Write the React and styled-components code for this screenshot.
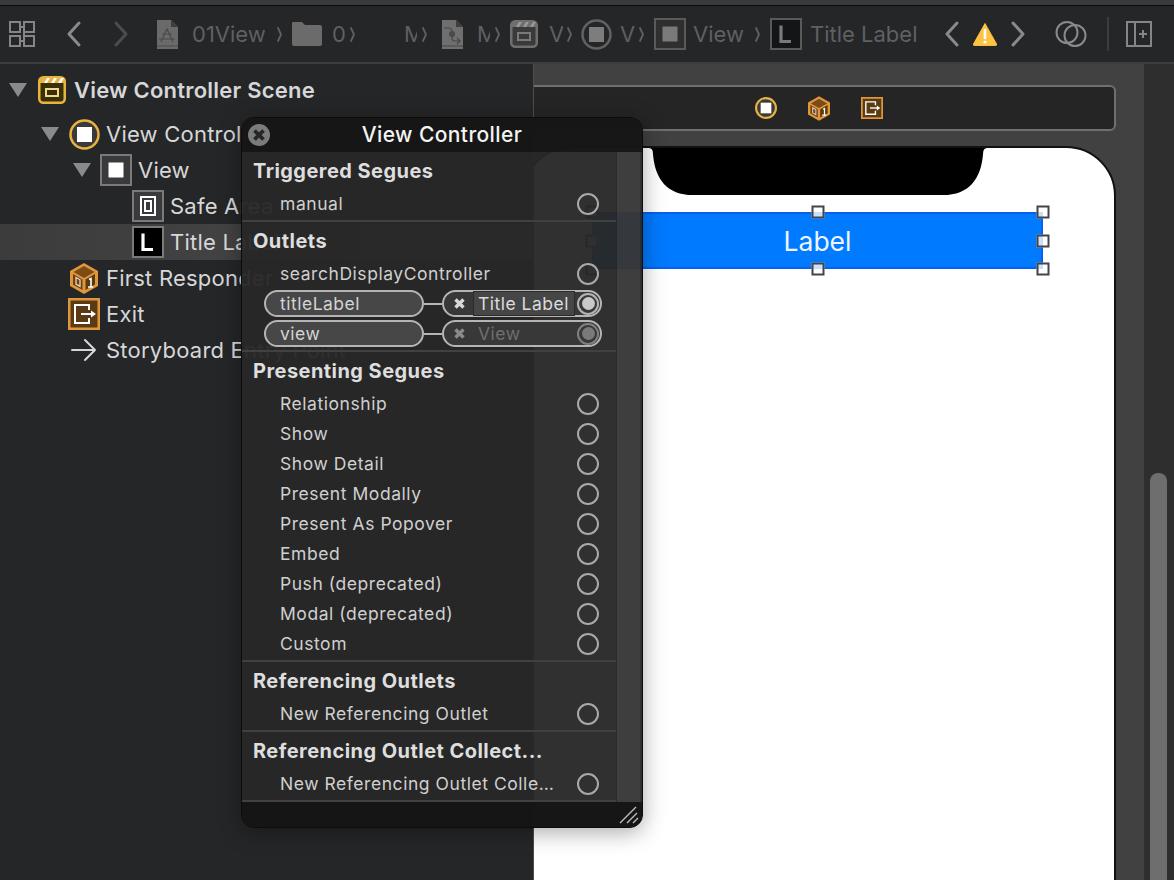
import React from 'react';
import styled, { createGlobalStyle } from 'styled-components';

const GlobalStyle = createGlobalStyle`
  html, body {
    margin: 0;
    padding: 0;
    height: 100%;
    overflow: hidden;
    background: #252628;
  }
  * {
    box-sizing: border-box;
  }
`;

const Window = styled.div`
  position: relative;
  width: 1174px;
  height: 880px;
  overflow: hidden;
  display: flex;
  flex-direction: column;
  font-family: Inter, "Liberation Sans", sans-serif;
`;

const TopStrip = styled.div`
  flex: none;
  height: 6px;
  background: #3a3a3c;
  border-bottom: 1px solid #0a0a0a;
`;

const Toolbar = styled.div`
  flex: none;
  height: 58px;
  display: flex;
  align-items: center;
  padding-left: 9px;
  background: #252628;
  border-bottom: 2px solid #3d3d3f;
`;

const Slot = styled.div`
  flex: none;
  display: flex;
  align-items: center;
  margin-left: ${(p) => p.$ml || 0}px;
`;

const Crumb = styled.div`
  flex: none;
  width: ${(p) => p.$w}px;
  margin-left: ${(p) => p.$ml || 0}px;
  overflow: hidden;
  white-space: nowrap;
  font-size: 22px;
  line-height: 30px;
  color: #5f6062;
`;

const Divider = styled.div`
  flex: none;
  width: 2px;
  height: 34px;
  margin-left: ${(p) => p.$ml}px;
  background: #3b3c3e;
`;

const Main = styled.div`
  flex: 1;
  min-height: 0;
  display: flex;
`;

const Sidebar = styled.div`
  flex: none;
  width: 534px;
  padding-top: 8px;
  background: #252628;
  border-right: 1px solid #4d4d4f;
  position: relative;
  z-index: 1;
`;

const Row = styled.div`
  display: flex;
  align-items: center;
  height: 36px;
  margin-bottom: ${(p) => (p.$scene ? 8 : 0)}px;
  padding-left: ${(p) => p.$level * 32 + 9}px;
  background: ${(p) => (p.$selected ? 'linear-gradient(90deg, #3c3c3d, #4a4a4a)' : 'transparent')};
`;

const Disclosure = styled.div`
  flex: none;
  width: 27px;
  display: flex;
`;

const IconSlot = styled.div`
  flex: none;
  width: 32px;
  height: 32px;
  display: flex;
  align-items: center;
  justify-content: center;
`;

const RowLabel = styled.span`
  margin-left: 6px;
  font-size: 22px;
  letter-spacing: 0.22px;
  font-weight: ${(p) => (p.$scene ? 600 : 400)};
  color: #d6d7d8;
  white-space: nowrap;
`;

const Canvas = styled.div`
  flex: 1;
  min-width: 0;
  display: flex;
  background: #414141;
  overflow: hidden;
`;

const Stage = styled.div`
  flex: none;
  width: 595px;
  margin-left: -13px;
  padding-top: 21px;
  display: flex;
  flex-direction: column;
`;

const SceneBar = styled.div`
  flex: none;
  height: 46px;
  display: flex;
  align-items: center;
  justify-content: center;
  gap: 31px;
  background: #252526;
  border: 2px solid #6f6f6f;
  border-radius: 6px;
`;

const Device = styled.div`
  flex: none;
  height: 800px;
  margin-top: 15px;
  display: flex;
  flex-direction: column;
  align-items: center;
  background: #fff;
  border: 2px solid #111;
  border-radius: 52px 50px 0 0;
`;

const Notch = styled.svg`
  flex: none;
  margin-right: 2px;
`;

const LabelBox = styled.div`
  position: relative;
  width: 451px;
  height: 57px;
  margin: 17px 2px 0 0;
  display: flex;
  align-items: center;
  justify-content: center;
  background: #007aff;
  box-shadow: inset 0 0 0 2px #0a60ee;
  font-size: 26.5px;
  color: #eef5ff;
`;

const Handle = styled.span`
  position: absolute;
  left: ${(p) => p.$x}%;
  top: ${(p) => p.$y}%;
  width: 13px;
  height: 13px;
  transform: translate(-50%, -50%);
  background: rgba(255, 255, 255, 0.78);
  border: 2px solid #444;
`;

const ScrollTrack = styled.div`
  flex: none;
  width: 30px;
  margin-left: auto;
  padding: 409px 7px 0 6px;
  background: #2e2e2e;
`;

const ScrollThumb = styled.div`
  height: 420px;
  border-radius: 8px 8px 0 0;
  background: #6e6e6e;
`;

const Popover = styled.div`
  position: absolute;
  z-index: 2;
  left: 241px;
  top: 117px;
  width: 402px;
  height: 711px;
  display: flex;
  flex-direction: column;
  overflow: hidden;
  background: rgba(40, 40, 40, 0.96);
  border: 1px solid #0c0c0c;
  border-radius: 13px;
  box-shadow: 0 4px 22px rgba(0, 0, 0, 0.35);
`;

const PopoverHeader = styled.div`
  flex: none;
  position: relative;
  height: 34px;
  padding-bottom: 2px;
  display: flex;
  align-items: center;
  justify-content: center;
  background: rgba(20, 20, 20, 0.88);
  font-size: 21px;
  font-weight: 500;
  letter-spacing: 0.4px;
  color: #f4f4f4;
`;

const CloseButton = styled.div`
  position: absolute;
  left: 6px;
  top: 6px;
  display: flex;
`;

const PopoverBody = styled.div`
  flex: 1;
  min-height: 0;
  display: flex;
`;

const SectionList = styled.div`
  flex: none;
  width: 374px;
`;

const Section = styled.div`
  padding: 1px 0;
  border-bottom: 2px solid #414141;
`;

const SectionTitle = styled.div`
  height: 36px;
  display: flex;
  align-items: center;
  padding-left: 11px;
  font-size: 20px;
  font-weight: 700;
  letter-spacing: 0.45px;
  color: #dedede;
  white-space: nowrap;
`;

const Item = styled.div`
  height: 30px;
  display: flex;
  align-items: center;
  justify-content: space-between;
  padding: 0 17px 0 38px;
  font-size: 17.5px;
  letter-spacing: 0.55px;
  color: #d0d0d0;
  white-space: nowrap;
`;

const ItemName = styled.span`
  margin-bottom: 2px;
`;

const Port = styled.span`
  flex: none;
  width: 22px;
  height: 22px;
  border-radius: 50%;
  border: 2px solid #a9a9a9;
`;

const Connection = styled.div`
  height: 30px;
  display: flex;
  align-items: center;
  padding-left: 22px;
`;

const Pill = styled.div`
  flex: none;
  width: 160px;
  height: 27px;
  margin-bottom: 1px;
  display: flex;
  align-items: center;
  border: 2px solid #b5b5b5;
  border-radius: 14px;
  background: ${(p) => (p.$target ? '#383838' : '#474747')};
  padding-left: ${(p) => (p.$target ? 10 : 14)}px;
  font-size: 17.5px;
  letter-spacing: 0.5px;
  color: #d4d4d4;
`;

const Wire = styled.div`
  flex: none;
  width: 18px;
  height: 2px;
  margin-bottom: 1px;
  background: #b5b5b5;
`;

const TargetName = styled.div`
  flex: none;
  width: 102px;
  height: 25px;
  margin-left: 8px;
  display: flex;
  align-items: center;
  padding-left: 4px;
  white-space: nowrap;
  background: ${(p) => (p.$dim ? 'transparent' : '#464646')};
  border: 1px solid ${(p) => (p.$dim ? 'transparent' : '#2b2b2b')};
  color: ${(p) => (p.$dim ? '#6f6f6f' : '#dcdcdc')};
`;

const ConnectedPort = styled.span`
  flex: none;
  width: 22px;
  height: 22px;
  margin-left: 2px;
  display: flex;
  align-items: center;
  justify-content: center;
  border-radius: 50%;
  border: 2px solid ${(p) => (p.$dim ? '#7f7f7f' : '#b5b5b5')};
  &::after {
    content: '';
    width: 13px;
    height: 13px;
    border-radius: 50%;
    background: ${(p) => (p.$dim ? '#7a7a7a' : '#c9c9c9')};
  }
`;

const ScrollColumn = styled.div`
  flex: none;
  width: 24px;
  background: rgba(255, 255, 255, 0.07);
  border-left: 1px solid rgba(0, 0, 0, 0.3);
`;

const PopoverFooter = styled.div`
  flex: none;
  height: 25px;
  display: flex;
  align-items: flex-end;
  justify-content: flex-end;
  padding: 0 3px 3px 0;
  background: rgba(20, 20, 20, 0.9);
`;

const Chevron = ({ dir = 'right', w = 14, h = 26, color = '#8a8a8a', sw = 3 }) => (
  <svg width={w} height={h} viewBox={`0 0 ${w} ${h}`} fill="none">
    <polyline
      points={dir === 'left' ? `${w - 2},2 2,${h / 2} ${w - 2},${h - 2}` : `2,2 ${w - 2},${h / 2} 2,${h - 2}`}
      stroke={color}
      strokeWidth={sw}
      strokeLinecap="round"
      strokeLinejoin="round"
    />
  </svg>
);

const Sep = () => <Chevron w={7} h={17} color="#5f6062" sw={1.8} />;

const GridIcon = () => (
  <svg width="26" height="26" viewBox="0 0 26 26" fill="none" stroke="#858585" strokeWidth="2">
    <rect x="1" y="1" width="10" height="10" />
    <rect x="15" y="1" width="10" height="10" />
    <rect x="1" y="15" width="10" height="10" />
    <rect x="15" y="15" width="10" height="10" />
    <path d="M11 6h4M15 11v4M11 20h4" />
  </svg>
);

const AppFileIcon = () => (
  <svg width="22" height="29" viewBox="0 0 22 29">
    <path d="M1 0h14l7 7v22H1z" fill="#6a6a6a" />
    <path d="M15 0v7h7z" fill="#3d3d3d" />
    <path d="M5 22L11 9l6 13M3 19h16M6 14h10" fill="none" stroke="#4a4a4a" strokeWidth="1.2" />
    <path d="M1 26h21" stroke="#4a4a4a" strokeWidth="1" />
  </svg>
);

const FolderIcon = () => (
  <svg width="30" height="24" viewBox="0 0 30 24">
    <path d="M1 0h9l3 3h15a2 2 0 0 1 2 2v17a2 2 0 0 1-2 2H2a2 2 0 0 1-2-2V1a1 1 0 0 1 1-1z" fill="#6b6b6b" />
  </svg>
);

const StoryFileIcon = () => (
  <svg width="22" height="29" viewBox="0 0 22 29">
    <path d="M1 0h14l7 7v22H1z" fill="#6f6f6f" />
    <path d="M15 0v7h7z" fill="#3d3d3d" />
    <path d="M3 8h5q3 0 3 4v6q0 3 3 3h5M16 18l3 3-3 3" fill="none" stroke="#474747" strokeWidth="1.2" />
    <circle cx="11" cy="14" r="3" fill="#4a4a4a" />
    <path d="M1 26h21" stroke="#474747" strokeWidth="1" />
  </svg>
);

const SceneIcon = ({ size = 28, border, stripe, inner, fill }) => (
  <svg width={size} height={size} viewBox="0 0 28 28">
    <rect x="1.25" y="1.25" width="25.5" height="25.5" rx="4" fill={fill} stroke={border} strokeWidth="2.5" />
    <path d="M2 2h24v5H2z" fill={border} />
    <path d="M6 7l3-5h3L9 7zM13 7l3-5h3l-3 5zM20 7l3-5h3l-3 5z" fill={stripe} />
    <rect x="8" y="13" width="12" height="7" fill="none" stroke={inner} strokeWidth="2" />
  </svg>
);

const RingIcon = ({ size = 31, ring, ringWidth = 2.5, fill, square }) => (
  <svg width={size} height={size} viewBox="0 0 31 31">
    <circle cx="15.5" cy="15.5" r="14" fill={fill} stroke={ring} strokeWidth={ringWidth} />
    <rect x="8" y="8" width="15" height="15" fill={square} />
  </svg>
);

const ViewBoxIcon = ({ size = 32, border, fill, square }) => (
  <svg width={size} height={size} viewBox="0 0 32 32">
    <rect x="1" y="1" width="30" height="30" fill={fill} stroke={border} strokeWidth="2" />
    <rect x="8.5" y="8.5" width="15" height="15" fill={square} />
  </svg>
);

const SafeAreaIcon = () => (
  <svg width="32" height="32" viewBox="0 0 32 32">
    <rect x="1" y="1" width="30" height="30" fill="#3a3a3c" stroke="#7a7a7a" strokeWidth="2" />
    <rect x="9" y="7" width="14" height="18" fill="none" stroke="#fff" strokeWidth="2" />
    <rect x="13" y="11" width="6" height="10" fill="none" stroke="#fff" strokeWidth="2" />
  </svg>
);

const LabelIcon = ({ border, fill, color }) => (
  <svg width="32" height="32" viewBox="0 0 32 32">
    <rect x="1" y="1" width="30" height="30" fill={fill} stroke={border} strokeWidth="2" />
    <path d="M11 7.5v16h10" fill="none" stroke={color} strokeWidth="3.2" />
  </svg>
);

const CubeIcon = ({ width = 28, height = 31 }) => (
  <svg width={width} height={height} viewBox="0 0 28 31">
    <path d="M14 0l14 8v15l-14 8-14-8V8z" fill="#e0963a" />
    <path d="M14 3l10.5 6L14 15 3.5 9z" fill="#7a4c18" />
    <path d="M3 11l9.5 5.5V27L3 21.5z" fill="#6a4215" />
    <path d="M25 11l-9.5 5.5V27l9.5-5.5z" fill="#5a3810" />
    <path d="M6 14.5l4 2.3v6.5l-4-2.3z" fill="none" stroke="#e8d8c0" strokeWidth="1.3" />
    <path d="M19 16.5l2-1v8M18 24h5" fill="none" stroke="#fff" strokeWidth="1.6" />
  </svg>
);

const ExitIcon = ({ size = 32 }) => (
  <svg width={size} height={size} viewBox="0 0 32 32">
    <rect x="1.25" y="1.25" width="29.5" height="29.5" fill="#5c3b14" stroke="#e0963a" strokeWidth="2.5" />
    <path d="M21 12V7H7v18h14v-5" fill="none" stroke="#fff" strokeWidth="2" />
    <path d="M13 16h12" stroke="#fff" strokeWidth="2" />
    <path d="M23 12.5l5 3.5-5 3.5z" fill="#fff" />
  </svg>
);

const EntryArrow = () => (
  <svg width="26" height="24" viewBox="0 0 26 24" fill="none" stroke="#d6d7d8" strokeWidth="2" strokeLinecap="round" strokeLinejoin="round">
    <path d="M1 12h23M14 2l10 10-10 10" />
  </svg>
);

const Triangle = () => (
  <svg width="18" height="14" viewBox="0 0 18 14">
    <path d="M0 0h18L9 14z" fill="#8a8a8c" />
  </svg>
);

const WarningIcon = () => (
  <svg width="24" height="24" viewBox="0 0 24 24">
    <path d="M12 1.5L23.5 22a1.2 1.2 0 0 1-1 1.6H1.5a1.2 1.2 0 0 1-1-1.6z" fill="#fdc441" stroke="#fdc441" strokeLinejoin="round" />
    <path d="M12 8v8" stroke="#fff" strokeWidth="2.6" strokeLinecap="round" />
    <circle cx="12" cy="20" r="1.6" fill="#fff" />
  </svg>
);

const LinkedCircles = () => (
  <svg width="32" height="26" viewBox="0 0 32 26" fill="none" stroke="#8a8a8a" strokeWidth="2">
    <circle cx="12" cy="11.5" r="10.5" />
    <circle cx="20" cy="14.5" r="10.5" />
  </svg>
);

const SplitIcon = () => (
  <svg width="26" height="26" viewBox="0 0 26 26" fill="none" stroke="#858585" strokeWidth="2">
    <rect x="1" y="1" width="24" height="24" />
    <path d="M9 1v24M17 9v8M13 13h8" />
  </svg>
);

const CloseGlyph = () => (
  <svg width="22" height="22" viewBox="0 0 22 22">
    <circle cx="11" cy="11" r="11" fill="#7b7b7b" />
    <path d="M6.5 6.5l9 9M15.5 6.5l-9 9" stroke="#262626" strokeWidth="3.8" />
  </svg>
);

const XGlyph = ({ color }) => (
  <svg width="11" height="11" viewBox="0 0 11 11">
    <path d="M1.5 1.5l8 8M9.5 1.5l-8 8" stroke={color} strokeWidth="3.4" />
  </svg>
);

const ResizeGrip = () => (
  <svg width="20" height="18" viewBox="0 0 20 18" fill="none" stroke="#bdbdbd" strokeWidth="1.4">
    <path d="M1 17L17 1M8 17L18 7M14 17l5-5" />
  </svg>
);

const sections = [
  { title: 'Triggered Segues', items: ['manual'] },
  { title: 'Outlets', items: ['searchDisplayController'], connections: true },
  {
    title: 'Presenting Segues',
    items: [
      'Relationship',
      'Show',
      'Show Detail',
      'Present Modally',
      'Present As Popover',
      'Embed',
      'Push (deprecated)',
      'Modal (deprecated)',
      'Custom',
    ],
  },
  { title: 'Referencing Outlets', items: ['New Referencing Outlet'] },
  { title: 'Referencing Outlet Collect...', items: ['New Referencing Outlet Colle…'] },
];

const connections = [
  { name: 'titleLabel', target: 'Title Label' },
  { name: 'view', target: 'View', dim: true },
];

const App = () => (
  <Window>
    <GlobalStyle />
    <TopStrip />
    <Toolbar>
      <Slot><GridIcon /></Slot>
      <Slot $ml={32}><Chevron dir="left" /></Slot>
      <Slot $ml={33}><Chevron color="#4d4d4f" /></Slot>
      <Slot $ml={28}><AppFileIcon /></Slot>
      <Crumb $ml={14} $w={73}>01View</Crumb>
      <Slot $ml={11}><Sep /></Slot>
      <Slot $ml={9}><FolderIcon /></Slot>
      <Crumb $ml={10} $w={13}>0</Crumb>
      <Slot $ml={4}><Sep /></Slot>
      <Crumb $ml={48} $w={13}>M</Crumb>
      <Slot $ml={4}><Sep /></Slot>
      <Slot $ml={13}><StoryFileIcon /></Slot>
      <Crumb $ml={14} $w={13}>M</Crumb>
      <Slot $ml={4}><Sep /></Slot>
      <Slot $ml={9}><SceneIcon border="#6f6f6f" stripe="#9a9a9a" inner="#7a7a7a" fill="#3a3a3a" /></Slot>
      <Crumb $ml={11} $w={14}>V</Crumb>
      <Slot $ml={3}><Sep /></Slot>
      <Slot $ml={8}><RingIcon ring="#626262" square="#7d7d7d" fill="none" /></Slot>
      <Crumb $ml={8} $w={15}>V</Crumb>
      <Slot $ml={3}><Sep /></Slot>
      <Slot $ml={9}><ViewBoxIcon border="#5a5a5a" fill="#2f2f30" square="#7a7a7a" /></Slot>
      <Crumb $ml={7} $w={52}>View</Crumb>
      <Slot $ml={9}><Sep /></Slot>
      <Slot $ml={9}><LabelIcon border="#5a5a5a" fill="#141516" color="#7a7a7a" /></Slot>
      <Crumb $ml={8} $w={110}>Title Label</Crumb>
      <Slot $ml={25}><Chevron dir="left" /></Slot>
      <Slot $ml={14}><WarningIcon /></Slot>
      <Slot $ml={14}><Chevron /></Slot>
      <Slot $ml={30}><LinkedCircles /></Slot>
      <Divider $ml={20} />
      <Slot $ml={17}><SplitIcon /></Slot>
    </Toolbar>
    <Main>
      <Sidebar>
        <Row $level={0} $scene>
          <Disclosure><Triangle /></Disclosure>
          <IconSlot><SceneIcon border="#eab33f" stripe="#fff" inner="#f0d890" fill="#3a3008" /></IconSlot>
          <RowLabel $scene>View Controller Scene</RowLabel>
        </Row>
        <Row $level={1}>
          <Disclosure><Triangle /></Disclosure>
          <IconSlot><RingIcon ring="#eab33f" fill="#3a3a3c" square="#fff" /></IconSlot>
          <RowLabel>View Controller</RowLabel>
        </Row>
        <Row $level={2}>
          <Disclosure><Triangle /></Disclosure>
          <IconSlot><ViewBoxIcon border="#7a7a7a" fill="#3a3a3c" square="#fff" /></IconSlot>
          <RowLabel>View</RowLabel>
        </Row>
        <Row $level={3}>
          <Disclosure />
          <IconSlot><SafeAreaIcon /></IconSlot>
          <RowLabel>Safe Area</RowLabel>
        </Row>
        <Row $level={3} $selected>
          <Disclosure />
          <IconSlot><LabelIcon border="#7a7a7a" fill="#000" color="#fff" /></IconSlot>
          <RowLabel>Title Label</RowLabel>
        </Row>
        <Row $level={1}>
          <Disclosure />
          <IconSlot><CubeIcon /></IconSlot>
          <RowLabel>First Responder</RowLabel>
        </Row>
        <Row $level={1}>
          <Disclosure />
          <IconSlot><ExitIcon /></IconSlot>
          <RowLabel>Exit</RowLabel>
        </Row>
        <Row $level={1}>
          <Disclosure />
          <IconSlot><EntryArrow /></IconSlot>
          <RowLabel>Storyboard Entry Point</RowLabel>
        </Row>
      </Sidebar>
      <Canvas>
        <Stage>
          <SceneBar>
            <RingIcon size={22} ring="#eab33f" fill="#3a3a3c" square="#fff" ringWidth={3} />
            <CubeIcon width={22} height={25} />
            <ExitIcon size={22} />
          </SceneBar>
          <Device>
            <Notch width="346" height="47" viewBox="0 0 346 46" preserveAspectRatio="none">
              <path d="M0 0h4q4 0 4 6c2 24 14 40 40 40h250c26 0 38-16 40-40q0-6 4-6h4z" fill="#000" />
            </Notch>
            <LabelBox>
              Label
              <Handle $x={0} $y={0} />
              <Handle $x={50} $y={0} />
              <Handle $x={100} $y={0} />
              <Handle $x={0} $y={50} />
              <Handle $x={100} $y={50} />
              <Handle $x={0} $y={100} />
              <Handle $x={50} $y={100} />
              <Handle $x={100} $y={100} />
            </LabelBox>
          </Device>
        </Stage>
        <ScrollTrack>
          <ScrollThumb />
        </ScrollTrack>
      </Canvas>
    </Main>
    <Popover>
      <PopoverHeader>
        <CloseButton><CloseGlyph /></CloseButton>
        View Controller
      </PopoverHeader>
      <PopoverBody>
        <SectionList>
          {sections.map((section) => (
            <Section key={section.title}>
              <SectionTitle>{section.title}</SectionTitle>
              {section.items.map((item) => (
                <Item key={item}>
                  <ItemName>{item}</ItemName>
                  <Port />
                </Item>
              ))}
              {section.connections &&
                connections.map((c) => (
                  <Connection key={c.name}>
                    <Pill>{c.name}</Pill>
                    <Wire />
                    <Pill $target>
                      <XGlyph color={c.dim ? '#8a8a8a' : '#d8d8d8'} />
                      <TargetName $dim={c.dim}>{c.target}</TargetName>
                      <ConnectedPort $dim={c.dim} />
                    </Pill>
                  </Connection>
                ))}
            </Section>
          ))}
        </SectionList>
        <ScrollColumn />
      </PopoverBody>
      <PopoverFooter><ResizeGrip /></PopoverFooter>
    </Popover>
  </Window>
);

export default App;
